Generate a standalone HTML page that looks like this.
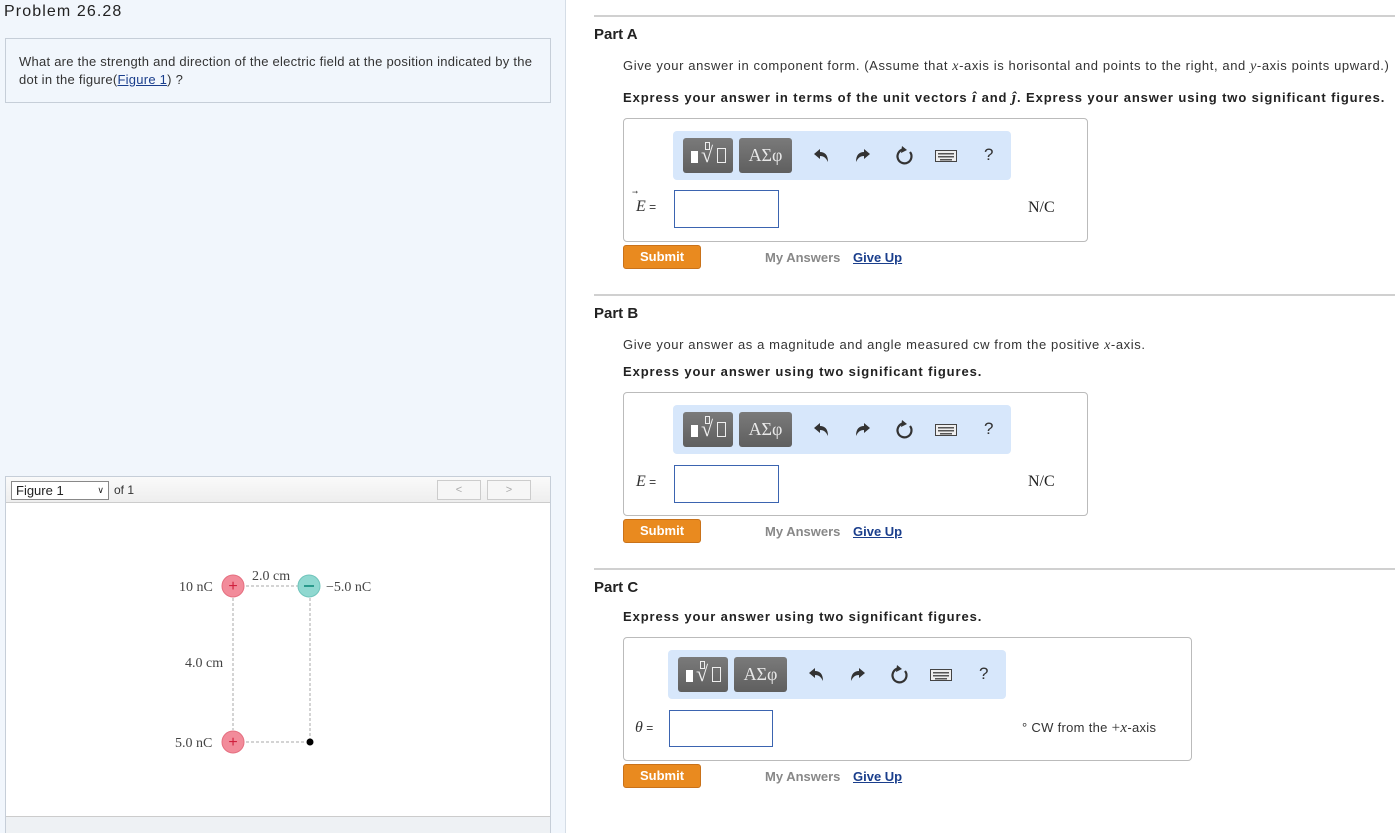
<!DOCTYPE html>
<html><head><meta charset="utf-8"><style>
*{box-sizing:border-box;margin:0;padding:0}
body{width:1395px;height:833px;position:relative;overflow:hidden;background:#fff;font-family:"Liberation Sans",Arial,sans-serif;color:#333}
.a{position:absolute}
#left{left:0;top:0;width:566px;height:833px;background:#f1f6fc;border-right:1px solid #d5dde6}
.hr{position:absolute;left:594px;right:0;height:2px;background:#d0d0d0}
.ph{font-size:15px;font-weight:bold;color:#222;top:0}
.t{font-size:13px;color:#333;letter-spacing:0.6px;white-space:nowrap}
.b{font-size:13px;font-weight:bold;color:#222;letter-spacing:0.9px;white-space:nowrap}
.box{position:absolute;border:1px solid #bbb;border-radius:4px;background:#fff}
.tb{position:absolute;width:338px;height:49px;background:#d7e7fb;border-radius:4px}
.btn{position:absolute;top:7px;height:35px;background:linear-gradient(#7a7a7a,#5f5f5f);border-radius:3px;color:#e8e8e8}
.inp{position:absolute;border:1px solid #3b64b0;background:#fff}
.sub{position:absolute;width:78px;height:24px;background:#e98a1f;border:1px solid #c9721a;border-radius:3px;color:#fff;font-weight:bold;font-size:13px;text-align:center;line-height:22px}
.my{position:absolute;font-size:13px;font-weight:bold;color:#888}
.gu{position:absolute;font-size:13px;font-weight:bold;color:#1a3e8c;text-decoration:underline}
.ser{font-family:"Liberation Serif",serif}
</style></head><body>
<div id="left" class="a"></div>
<div class="a" style="left:4px;top:3px;font-size:16px;color:#222;letter-spacing:1.1px">Problem 26.28</div>
<div class="a" style="left:5px;top:38px;width:546px;height:65px;border:1px solid #c6ced8;background:#f1f6fc"></div>
<div class="a" style="left:19px;top:53px;width:525px;line-height:18px;font-size:13px;letter-spacing:0.25px">What are the strength and direction of the electric field at the position indicated by the dot in the figure(<span style="color:#1a3e8c;text-decoration:underline">Figure 1</span>) ?</div>

<div class="a" style="left:5px;top:476px;width:546px;height:357px;border:1px solid #c6ced8;background:#fff"></div>
<div class="a" style="left:6px;top:477px;width:544px;height:26px;background:linear-gradient(#fafafa,#eee);border-bottom:1px solid #ccc"></div>
<div class="a" style="left:11px;top:481px;width:98px;height:19px;border:1px solid #888;background:#fff;font-size:13px;padding-left:4px;line-height:17px;color:#222">Figure 1<span style="position:absolute;right:4px;font-size:9px">&#x2228;</span></div>
<div class="a" style="left:114px;top:483px;font-size:12px">of 1</div>
<div class="a" style="left:437px;top:480px;width:44px;height:20px;border:1px solid #ccc;background:#f6f6f6;color:#aaa;font-size:11px;text-align:center;line-height:18px">&lt;</div>
<div class="a" style="left:487px;top:480px;width:44px;height:20px;border:1px solid #ccc;background:#f6f6f6;color:#aaa;font-size:11px;text-align:center;line-height:18px">&gt;</div>
<div class="a" style="left:6px;top:816px;width:544px;height:17px;background:#eef1f4;border-top:1px solid #ccc"></div>
<svg class="a" style="left:160px;top:560px" width="240" height="200">
<g stroke="#aaa" stroke-dasharray="3,2" stroke-width="1" fill="none">
<line x1="86" y1="26" x2="138" y2="26"/><line x1="73" y1="38" x2="73" y2="170"/>
<line x1="150" y1="38" x2="150" y2="180"/><line x1="86" y1="182" x2="146" y2="182"/></g>
<circle cx="73" cy="26" r="11" fill="#f28b9a" stroke="#e56f80"/><text x="73" y="31" text-anchor="middle" font-size="16" fill="#d0203e">+</text>
<circle cx="149" cy="26" r="11" fill="#8fd8d0" stroke="#6fc4bb"/><rect x="144" y="25" width="10" height="2" fill="#2a9a8c"/>
<circle cx="73" cy="182" r="11" fill="#f28b9a" stroke="#e56f80"/><text x="73" y="187" text-anchor="middle" font-size="16" fill="#d0203e">+</text>
<circle cx="150" cy="182" r="3.5" fill="#000"/>
<g font-family="Liberation Serif,serif" font-size="14" fill="#444">
<text x="19" y="31">10 nC</text><text x="92" y="20">2.0 cm</text><text x="166" y="31">−5.0 nC</text>
<text x="25" y="107">4.0 cm</text><text x="15" y="187">5.0 nC</text></g></svg>

<div class="hr" style="top:15px"></div>
<div class="a ph" style="left:594px;top:26px">Part A</div>
<div class="a t" style="left:623px;top:58px">Give your answer in component form. (Assume that <i class="ser" style="font-size:14px">x</i>-axis is horisontal and points to the right, and <i class="ser" style="font-size:14px">y</i>-axis points upward.)</div>
<div class="a b" style="left:623px;top:90px">Express your answer in terms of the unit vectors <i class="ser" style="font-size:15px">î</i> and <i class="ser" style="font-size:15px">ĵ</i>. Express your answer using two significant figures.</div>
<div class="box" style="left:623px;top:118px;width:465px;height:124px"></div>

<div class="hr" style="top:294px"></div>
<div class="a ph" style="left:594px;top:305px">Part B</div>
<div class="a t" style="left:623px;top:337px">Give your answer as a magnitude and angle measured cw from the positive <i class="ser" style="font-size:14px">x</i>-axis.</div>
<div class="a b" style="left:623px;top:364px">Express your answer using two significant figures.</div>
<div class="box" style="left:623px;top:392px;width:465px;height:124px"></div>

<div class="hr" style="top:568px"></div>
<div class="a ph" style="left:594px;top:579px">Part C</div>
<div class="a b" style="left:623px;top:609px">Express your answer using two significant figures.</div>
<div class="box" style="left:623px;top:637px;width:569px;height:124px"></div>

<div id="tbs"></div>
<script>
function tb(x,y){return `<div class="tb" style="left:${x}px;top:${y}px">
<div class="btn" style="left:10px;width:50px"><div class="a" style="left:8px;top:13px;width:7px;height:12px;background:#fff"></div><span class="a ser" style="left:18px;top:4px;font-size:22px;color:#eee">√</span><div class="a" style="left:22px;top:4px;width:5px;height:8px;border:1px solid #eee"></div><div class="a" style="left:34px;top:10px;width:9px;height:15px;border:1px solid #eee"></div></div>
<div class="btn ser" style="left:66px;width:53px;font-size:18px;text-align:center;line-height:35px">ΑΣφ</div>
<svg class="a" style="left:139px;top:16px" width="18" height="18"><path d="M2 7 L8 2 L8 5 C13 5 16 8 16 15 C14 11 12 9 8 9 L8 12 Z" fill="#333"/></svg>
<svg class="a" style="left:181px;top:16px" width="18" height="18"><path d="M16 7 L10 2 L10 5 C5 5 2 8 2 15 C4 11 6 9 10 9 L10 12 Z" fill="#333"/></svg>
<svg class="a" style="left:222px;top:15px" width="20" height="20"><path d="M15 6 A7 7 0 1 1 8 3.5" fill="none" stroke="#333" stroke-width="2.2"/><path d="M7 0 L12 4 L6 7 Z" fill="#333"/></svg>
<svg class="a" style="left:262px;top:19px" width="22" height="12"><rect x="0.5" y="0.5" width="21" height="11" fill="#eee" stroke="#444"/><g fill="#555"><rect x="3" y="3" width="16" height="1.5"/><rect x="3" y="6" width="16" height="1.5"/><rect x="5" y="9" width="12" height="1.5"/></g></svg>
<span class="a" style="left:311px;top:14px;font-size:17px;color:#333">?</span></div>`}
document.getElementById('tbs').innerHTML=tb(673,131)+tb(673,405)+tb(668,650);
</script>

<div class="a ser" style="left:636px;top:198px;font-size:16px;font-style:italic">E<span style="position:absolute;left:2px;top:-9px;font-size:12px;font-style:normal">&#8407;</span><span style="font-family:'Liberation Sans';font-style:normal;font-size:12px"> =</span></div>
<div class="inp" style="left:674px;top:190px;width:105px;height:38px"></div>
<div class="a ser" style="left:1028px;top:199px;font-size:16px;color:#222">N/C</div>
<div class="sub" style="left:623px;top:245px">Submit</div>
<div class="my" style="left:765px;top:250px">My Answers</div><div class="gu" style="left:853px;top:250px">Give Up</div>

<div class="a ser" style="left:636px;top:473px;font-size:16px;font-style:italic">E<span style="font-family:'Liberation Sans';font-style:normal;font-size:12px"> =</span></div>
<div class="inp" style="left:674px;top:465px;width:105px;height:38px"></div>
<div class="a ser" style="left:1028px;top:473px;font-size:16px;color:#222">N/C</div>
<div class="sub" style="left:623px;top:519px">Submit</div>
<div class="my" style="left:765px;top:524px">My Answers</div><div class="gu" style="left:853px;top:524px">Give Up</div>

<div class="a ser" style="left:635px;top:719px;font-size:16px;font-style:italic">θ<span style="font-family:'Liberation Sans';font-style:normal;font-size:12px"> =</span></div>
<div class="inp" style="left:669px;top:710px;width:104px;height:37px"></div>
<div class="a" style="left:1022px;top:720px;font-size:13px;color:#333;letter-spacing:0.3px">° CW from the <span class="ser" style="font-size:15px">+<i>x</i></span>-axis</div>
<div class="sub" style="left:623px;top:764px">Submit</div>
<div class="my" style="left:765px;top:769px">My Answers</div><div class="gu" style="left:853px;top:769px">Give Up</div>
</body></html>
